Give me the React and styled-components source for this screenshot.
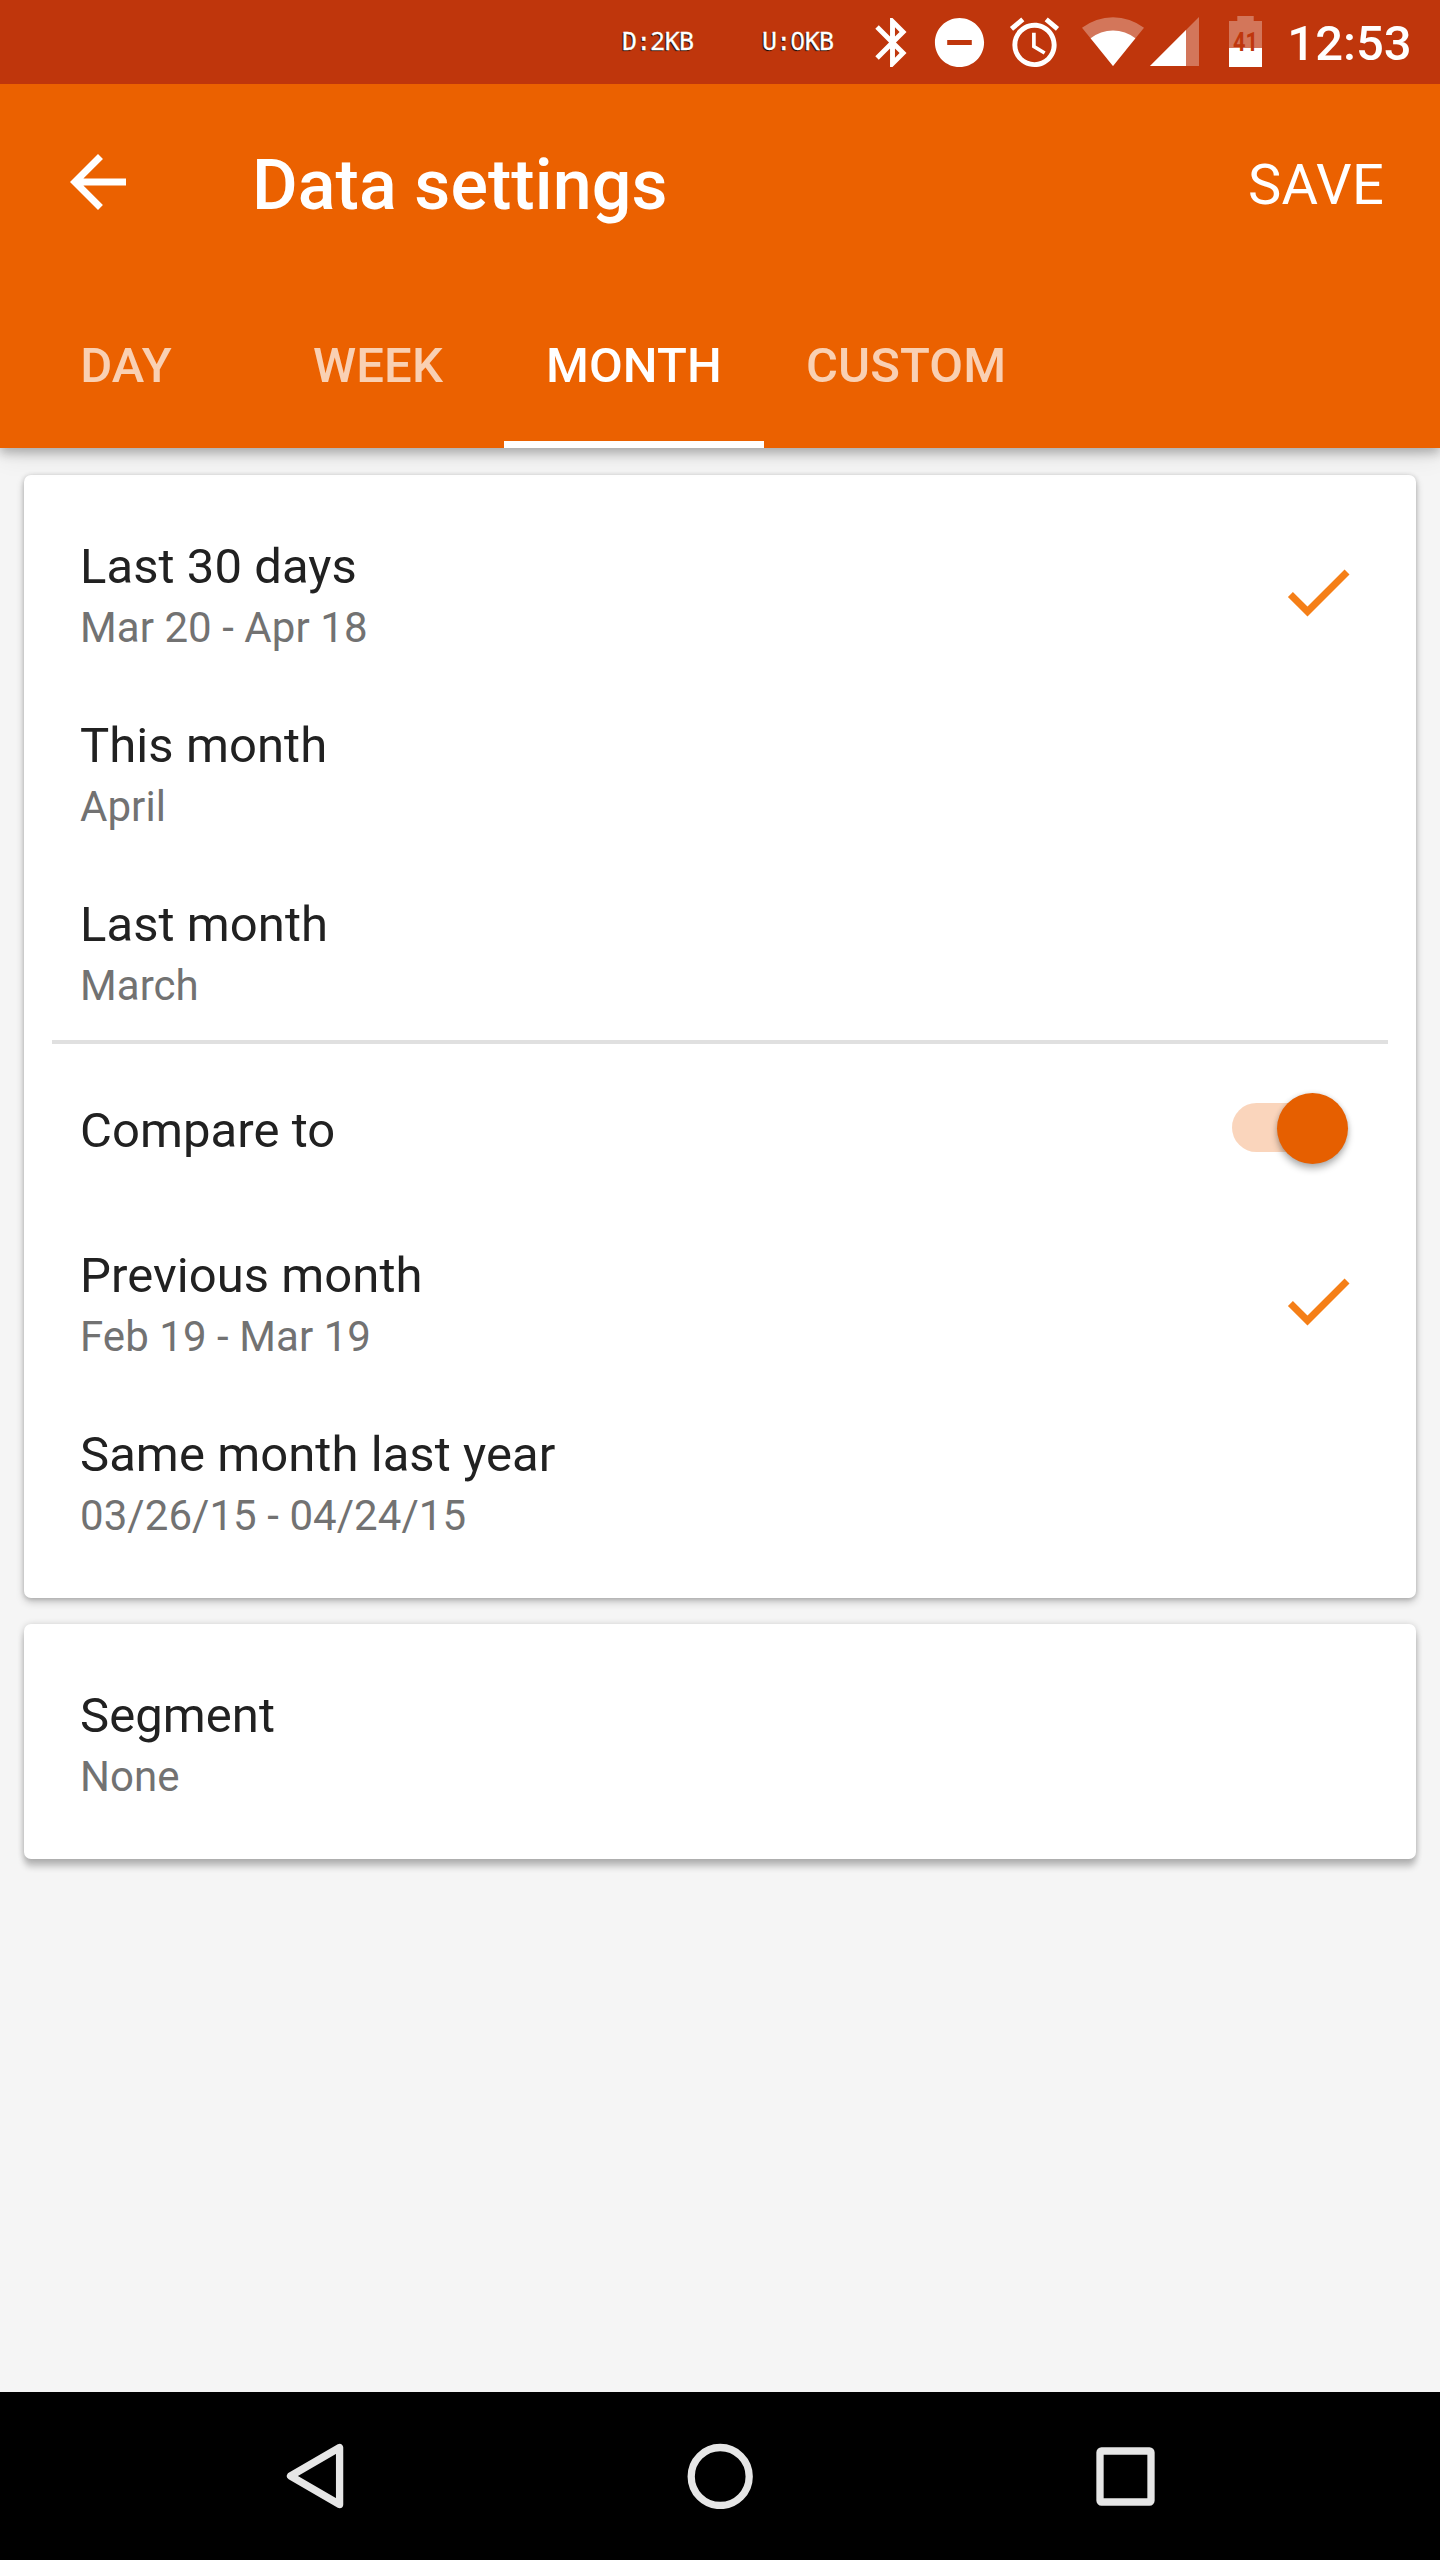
import React, { useState } from 'react';
import styled, { createGlobalStyle } from 'styled-components';
import { MdArrowBack, MdCheck, MdBluetooth, MdDoNotDisturbOn } from 'react-icons/md';

const tabs = ['Day', 'Week', 'Month', 'Custom'];

const ranges = [
  { id: 'last30', title: 'Last 30 days', detail: 'Mar 20 - Apr 18' },
  { id: 'thisMonth', title: 'This month', detail: 'April' },
  { id: 'lastMonth', title: 'Last month', detail: 'March' },
];

const comparisons = [
  { id: 'previous', title: 'Previous month', detail: 'Feb 19 - Mar 19' },
  { id: 'lastYear', title: 'Same month last year', detail: '03/26/15 - 04/24/15' },
];

const AlarmIcon = () => (
  <svg viewBox="0 0 24 24" fill="currentColor">
    <path d="M22 5.72l-4.6-3.86-1.29 1.53 4.6 3.86L22 5.72zM7.88 3.39L6.6 1.86 2 5.71l1.29 1.53 4.59-3.85zM12.5 8H11v6l4.75 2.85.75-1.23-4-2.37V8zM12 4c-4.97 0-9 4.03-9 9s4.02 9 9 9c4.97 0 9-4.03 9-9s-4.03-9-9-9zm0 16c-3.87 0-7-3.13-7-7s3.13-7 7-7 7 3.13 7 7-3.13 7-7 7z" />
  </svg>
);

const WifiIcon = () => (
  <svg viewBox="0 0 62 49" fill="#fff">
    <path d="M31 49L0 10.7A51 51 0 0 1 62 10.7Z" fillOpacity="0.32" />
    <path d="M31 49L8.6 21.2A36 36 0 0 1 53.4 21.2Z" />
  </svg>
);

const SignalIcon = () => (
  <svg viewBox="0 0 49 49" fill="#fff">
    <path d="M0 49L49 0V49Z" fillOpacity="0.32" />
    <path d="M0 49L36 13V49Z" />
  </svg>
);

const BatteryIcon = ({ level }) => (
  <svg viewBox="0 0 33 51" fill="#fff">
    <path d="M8.3 0H24.7V5H33V32H0V5H8.3Z" fillOpacity="0.32" />
    <path d="M0 32H33V51H0Z" />
    <text x="4" y="35" fill="#bf360c" fontFamily="Roboto" fontWeight="700" fontSize="25" textLength="25" lengthAdjust="spacingAndGlyphs">{level}</text>
  </svg>
);

const Option = ({ title, detail, checked, onClick }) => (
  <Row onClick={onClick}>
    <div>
      <Title>{title}</Title>
      <Detail>{detail}</Detail>
    </div>
    {checked && <MdCheck className="check" />}
  </Row>
);

const App = () => {
  const [tab, setTab] = useState('Month');
  const [range, setRange] = useState('last30');
  const [compare, setCompare] = useState(true);
  const [comparison, setComparison] = useState('previous');

  return (
    <Screen>
      <GlobalStyle />
      <StatusBar>
        <Traffic>D:<span>2</span>KB</Traffic>
        <Traffic $gap={67.7}>U:<span>0</span>KB</Traffic>
        <StatusIcon $gap={29} $w={59} $h={59}><MdBluetooth /></StatusIcon>
        <StatusIcon $gap={8} $w={59} $h={59}><MdDoNotDisturbOn /></StatusIcon>
        <StatusIcon $gap={16} $w={59} $h={59}><AlarmIcon /></StatusIcon>
        <StatusIcon $gap={18} $w={62} $h={49} $top={17}><WifiIcon /></StatusIcon>
        <StatusIcon $gap={6} $w={49} $h={49} $top={17}><SignalIcon /></StatusIcon>
        <StatusIcon $gap={30} $w={33} $h={51} $top={16}><BatteryIcon level="41" /></StatusIcon>
        <Clock>12:53</Clock>
      </StatusBar>

      <Header>
        <Toolbar>
          <MdArrowBack className="back" />
          <h1>Data settings</h1>
          <Save>SAVE</Save>
        </Toolbar>
        <Tabs>
          {tabs.map((name) => (
            <Tab key={name} $active={name === tab} onClick={() => setTab(name)}>
              {name.toUpperCase()}
            </Tab>
          ))}
        </Tabs>
      </Header>

      <Content>
        <Card>
          {ranges.map((item) => (
            <Option key={item.id} {...item} checked={item.id === range} onClick={() => setRange(item.id)} />
          ))}
          <Divider />
          <CompareRow onClick={() => setCompare(!compare)}>
            <Title>Compare to</Title>
            <Switch $on={compare}><Thumb /></Switch>
          </CompareRow>
          {comparisons.map((item) => (
            <Option key={item.id} {...item} checked={item.id === comparison} onClick={() => setComparison(item.id)} />
          ))}
        </Card>
        <Card $raised>
          <Option title="Segment" detail="None" />
        </Card>
      </Content>

      <NavBar>
        <NavButton>
          <svg width="66" height="66" viewBox="0 0 66 66">
            <path d="M57.6 4.5V61.5L8.5 33Z" />
          </svg>
        </NavButton>
        <NavButton>
          <svg width="66" height="66" viewBox="0 0 66 66">
            <circle cx="33.2" cy="33.5" r="29" />
          </svg>
        </NavButton>
        <NavButton>
          <svg width="66" height="66" viewBox="0 0 66 66">
            <rect x="8" y="8" width="51" height="51" rx="1.5" />
          </svg>
        </NavButton>
      </NavBar>
    </Screen>
  );
};

const GlobalStyle = createGlobalStyle`
  * {
    box-sizing: border-box;
  }

  body {
    margin: 0;
    background: #f5f5f5;
    font-family: Roboto, "Liberation Sans", sans-serif;
  }
`;

const Screen = styled.div`
  display: flex;
  flex-direction: column;
  width: 1440px;
  height: 2560px;
  overflow: hidden;
  background: #f5f5f5;
`;

const StatusBar = styled.div`
  position: relative;
  z-index: 1;
  display: flex;
  align-items: flex-start;
  height: 84px;
  padding-left: 622px;
  background: #bf360c;
  color: #fff;
`;

const Traffic = styled.div`
  flex: none;
  width: 72.3px;
  margin-left: ${({ $gap }) => $gap || 0}px;
  padding-top: 26px;
  font-family: "DejaVu Sans Mono", monospace;
  font-size: 25px;
  letter-spacing: -0.8px;
  line-height: 28px;
  white-space: nowrap;
  text-shadow: -1px 1px 1px rgba(0, 0, 0, 0.9);
  -webkit-text-stroke: 0.3px #fff;

  span {
    font-family: "Noto Sans", sans-serif;
    letter-spacing: 0;
  }
`;

const StatusIcon = styled.div`
  flex: none;
  width: ${({ $w }) => $w}px;
  height: ${({ $h }) => $h}px;
  margin-left: ${({ $gap }) => $gap}px;
  margin-top: ${({ $top }) => $top || 13}px;

  svg {
    display: block;
    width: 100%;
    height: 100%;
  }
`;

const Clock = styled.div`
  margin-left: 25px;
  padding-top: 14px;
  font-size: 49px;
  font-weight: 500;
  line-height: 60px;
`;

const Header = styled.header`
  position: relative;
  height: 364px;
  background: #eb6100;
  color: #fff;
  box-shadow: 0 5px 10px rgba(0, 0, 0, 0.25), 0 4px 26px rgba(0, 0, 0, 0.12);
`;

const Toolbar = styled.div`
  display: flex;
  align-items: center;
  height: 196px;
  padding: 0 56px;

  .back {
    width: 84px;
    height: 84px;
  }

  h1 {
    margin: 6px 0 0 112px;
    font-size: 70px;
    font-weight: 500;
    letter-spacing: 0.08px;
    line-height: 84px;
  }
`;

const Save = styled.div`
  margin-left: auto;
  padding-top: 6px;
  font-size: 56px;
  letter-spacing: 0.25px;
  line-height: 66px;
`;

const Tabs = styled.div`
  display: flex;
  height: 168px;
`;

const Tab = styled.div`
  display: flex;
  align-items: center;
  justify-content: center;
  min-width: 252px;
  padding: 13px 42px 4px;
  border-bottom: 7px solid ${({ $active }) => ($active ? '#fff' : 'transparent')};
  color: ${({ $active }) => ($active ? '#fff' : 'rgba(255, 255, 255, 0.7)')};
  font-size: 49px;
  font-weight: 500;
  letter-spacing: 0.12px;
`;

const Content = styled.main`
  display: flex;
  flex: 1;
  flex-direction: column;
  gap: 26px;
  padding: 27px 24px 0;
`;

const Card = styled.section`
  padding: 28px 0;
  border-radius: 7px;
  background: #fff;
  box-shadow: ${({ $raised }) =>
    $raised
      ? '0 8px 6px rgba(0, 0, 0, 0.2), 0 1px 7px rgba(0, 0, 0, 0.2)'
      : '0 4px 9px rgba(0, 0, 0, 0.2), 0 1px 5px rgba(0, 0, 0, 0.2)'};
`;

const Row = styled.div`
  display: flex;
  align-items: center;
  justify-content: space-between;
  height: 179px;
  padding: 0 56px;

  .check {
    width: 84px;
    height: 84px;
    margin-bottom: 2px;
    color: #f57f17;
  }
`;

const Title = styled.div`
  color: #212121;
  font-size: 49px;
  letter-spacing: 0.06px;
  line-height: 60px;
`;

const CompareRow = styled(Row)`
  height: 168px;
  padding-right: 68px;

  ${Title} {
    padding-top: 5px;
  }
`;

const Detail = styled.div`
  margin-top: 6px;
  margin-bottom: -5px;
  color: #727272;
  font-size: 42px;
  letter-spacing: 0.06px;
  line-height: 50px;
`;

const Divider = styled.div`
  height: 4px;
  margin: 0 28px;
  background: #e0e0e0;
`;

const Switch = styled.div`
  display: flex;
  align-items: center;
  justify-content: ${({ $on }) => ($on ? 'flex-end' : 'flex-start')};
  width: 116px;
  height: 49px;
  margin-bottom: 1px;
  border-radius: 25px;
  background: linear-gradient(#fad5bc, #fad5bc) left / 100px 100% no-repeat;
`;

const Thumb = styled.div`
  width: 71px;
  height: 71px;
  margin-top: 2px;
  border-radius: 50%;
  background: #e65f00;
  box-shadow: 0 5px 7px rgba(0, 0, 0, 0.28), 0 0 5px rgba(0, 0, 0, 0.12);
`;

const NavBar = styled.nav`
  display: flex;
  justify-content: center;
  height: 168px;
  background: #000;
`;

const NavButton = styled.div`
  display: flex;
  align-items: center;
  justify-content: center;
  width: 405px;

  svg {
    fill: none;
    stroke: #e6e6e6;
    stroke-width: 7.3;
    stroke-linejoin: round;
  }
`;

export default App;
